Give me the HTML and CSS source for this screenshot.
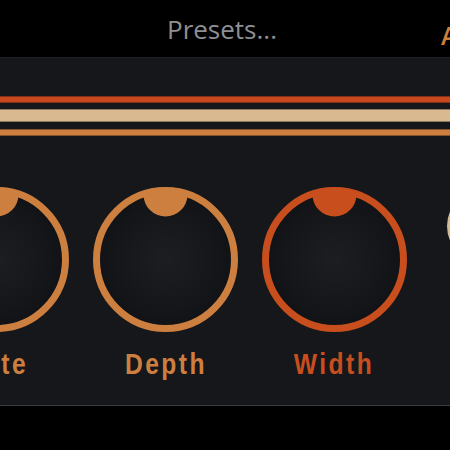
FILE: index.html
```html
<!DOCTYPE html>
<html>
<head>
<meta charset="utf-8">
<link rel="stylesheet" href="styles.css">
</head>
<body>
<header class="topbar">
  <span class="presets">Presets...</span>
  <span class="brand">A</span>
</header>
<main class="panel">
  <div class="stripe stripe-red"></div>
  <div class="stripe stripe-cream"></div>
  <div class="stripe stripe-orange"></div>
  <div class="knobs">
    <div class="knob-col">
      <svg class="knob" viewBox="0 0 145 145" width="145" height="145">
        <defs>
          <radialGradient id="kg" cx="0.5" cy="0.5" r="0.5">
            <stop offset="0" stop-color="#1d1e21"/>
            <stop offset="0.8" stop-color="#141518"/>
            <stop offset="1" stop-color="#111215"/>
          </radialGradient>
          <clipPath id="kc"><circle cx="72.5" cy="72.5" r="72"/></clipPath>
        </defs>
        <circle cx="72.5" cy="72.5" r="69" fill="url(#kg)" stroke="#cd7f40" stroke-width="7"/>
        <circle cx="72.5" cy="7.5" r="22" fill="#cd7f40" clip-path="url(#kc)"/>
      </svg>
      <span class="label label-orange">Rate</span>
    </div>
    <div class="knob-col">
      <svg class="knob" viewBox="0 0 145 145" width="145" height="145">
        <circle cx="72.5" cy="72.5" r="69" fill="url(#kg)" stroke="#cd7f40" stroke-width="7"/>
        <circle cx="72.5" cy="7.5" r="22" fill="#cd7f40" clip-path="url(#kc)"/>
      </svg>
      <span class="label label-orange">Depth</span>
    </div>
    <div class="knob-col">
      <svg class="knob" viewBox="0 0 145 145" width="145" height="145">
        <circle cx="72.5" cy="72.5" r="69" fill="url(#kg)" stroke="#c84e1e" stroke-width="7"/>
        <circle cx="72.5" cy="7.5" r="22" fill="#c84e1e" clip-path="url(#kc)"/>
      </svg>
      <span class="label label-red">Width</span>
    </div>
    <div class="knob-small">
      <svg viewBox="0 0 72 72" width="72" height="72">
        <circle cx="36" cy="36" r="32" fill="url(#kg)" stroke="#d9ba90" stroke-width="6"/>
      </svg>
    </div>
  </div>
</main>
</body>
</html>
```
FILE: styles.css
```css
html, body {
  margin: 0;
  padding: 0;
  background: #000;
  width: 450px;
  height: 450px;
  overflow: hidden;
}

.topbar {
  height: 57px;
  display: flex;
  align-items: flex-start;
  padding-left: 167px;
  gap: 164px;
  box-sizing: border-box;
  white-space: nowrap;
}

.presets {
  font-family: "Open Sans", "Noto Sans", sans-serif;
  font-size: 26px;
  line-height: 26px;
  color: #8d8f93;
  margin-top: 16px;
}

.brand {
  font-family: "Open Sans", "Noto Sans", sans-serif;
  font-size: 25px;
  line-height: 25px;
  font-weight: 600;
  color: #d07f3a;
  margin-top: 23px;
}

.panel {
  height: 349px;
  background: #16171b;
  border-top: 1px solid #1f2024;
  border-bottom: 1px solid #3b3c3f;
  box-sizing: border-box;
  padding-top: 38px;
  overflow: hidden;
}

.stripe {
  box-shadow: inset 0 1px 0 rgba(0,0,0,0.35), inset 0 -1px 0 rgba(0,0,0,0.35);
}

.stripe-red {
  height: 7px;
  background: #c8491f;
}

.stripe-cream {
  height: 13px;
  margin-top: 6px;
  background: #d9ba90;
}

.stripe-orange {
  height: 7px;
  margin-top: 7px;
  background: #cd7f40;
}

.knobs {
  display: flex;
  gap: 24px;
  margin-top: 51px;
  margin-left: -76px;
}

.knob-col {
  flex: 0 0 145px;
  display: flex;
  flex-direction: column;
  align-items: center;
}

.knob {
  display: block;
}

.label {
  display: inline-block;
  margin-top: 17px;
  font-family: "Liberation Sans", "Arial", sans-serif;
  font-weight: 700;
  font-size: 30px;
  line-height: 30px;
  letter-spacing: 3px;
  white-space: nowrap;
  transform: scaleX(0.82);
}

.label-orange { color: #cd7f40; }
.label-red { color: #c84e1e; }

.knob-small {
  flex: 0 0 72px;
  margin-left: 15px;
  margin-top: 3px;
}

.knob-small svg {
  display: block;
}
```
